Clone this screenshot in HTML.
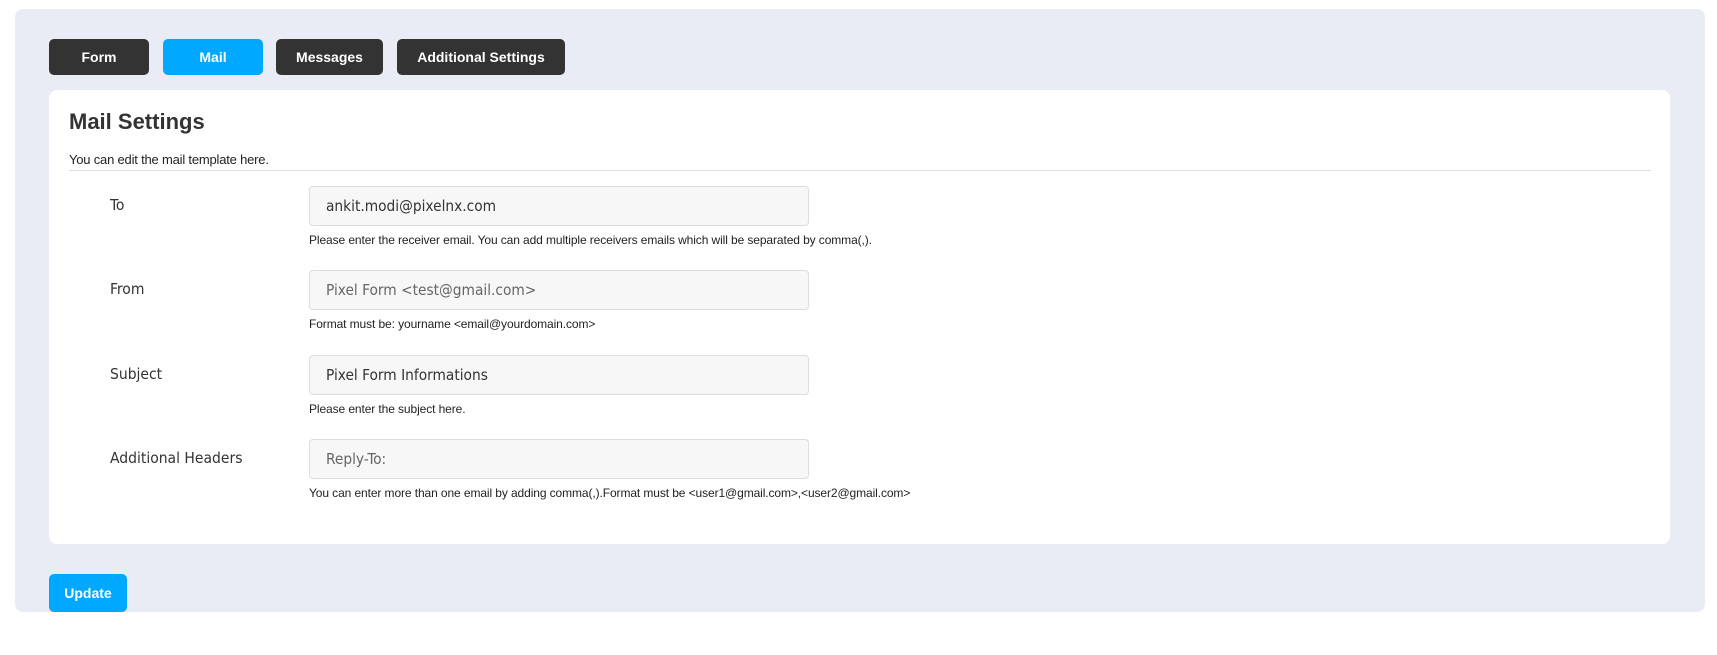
<!DOCTYPE html>
<html><head><meta charset="utf-8"><style>
*{box-sizing:border-box;margin:0;padding:0}
body{width:1717px;height:655px;background:#fff;font-family:"Liberation Sans",Arial,sans-serif;position:relative;overflow:hidden}
.outer{position:absolute;left:15px;top:9px;width:1690px;height:603px;background:#e9ecf4;border-radius:8px}
.tab{position:absolute;top:39px;height:36px;border-radius:5px;background:#333;color:#fff;font-weight:bold;font-size:14px;line-height:36px;text-align:center}
.card{position:absolute;left:49px;top:90px;width:1621px;height:454px;background:#fff;border-radius:8px}
h1{position:absolute;left:69px;top:109px;font-size:22px;color:#333;font-weight:bold}
.sub{position:absolute;left:69px;top:152px;font-size:13px;color:#222;letter-spacing:-0.2px}
.hr{position:absolute;left:69px;top:170px;width:1582px;height:1px;background:#ddd}
.lbl{position:absolute;left:110px;color:#333;font-family:"DejaVu Sans Condensed","Liberation Sans",sans-serif;font-size:15.5px}
.inp{position:absolute;left:309px;width:500px;height:40px;background:#f7f7f7;border:1px solid #ddd;border-radius:4px;padding-left:16px;line-height:38px;font-size:15.3px;color:#333;font-family:"DejaVu Sans Condensed","Liberation Sans",sans-serif}
.ph{color:#666}
.help{position:absolute;left:309px;font-size:12px;color:#222;letter-spacing:-0.1px}
.btn{position:absolute;left:49px;top:574px;width:78px;height:38px;background:#00a8ff;border-radius:5px;color:#fff;font-weight:bold;font-size:14px;line-height:38px;text-align:center}
</style></head><body>
<div class="outer"></div>
<div class="tab" style="left:49px;width:100px">Form</div>
<div class="tab" style="left:163px;width:100px;background:#00a8ff">Mail</div>
<div class="tab" style="left:276px;width:107px">Messages</div>
<div class="tab" style="left:397px;width:168px">Additional Settings</div>
<div class="card"></div>
<h1>Mail Settings</h1>
<div class="sub">You can edit the mail template here.</div>
<div class="hr"></div>

<div class="lbl" style="top:196px">To</div>
<div class="inp" style="top:186px">ankit.modi@pixelnx.com</div>
<div class="help" style="top:233px">Please enter the receiver email. You can add multiple receivers emails which will be separated by comma(,).</div>

<div class="lbl" style="top:280px">From</div>
<div class="inp ph" style="top:270px">Pixel Form &lt;test@gmail.com&gt;</div>
<div class="help" style="top:317px">Format must be: yourname &lt;email@yourdomain.com&gt;</div>

<div class="lbl" style="top:365px">Subject</div>
<div class="inp" style="top:355px">Pixel Form Informations</div>
<div class="help" style="top:402px">Please enter the subject here.</div>

<div class="lbl" style="top:449px">Additional Headers</div>
<div class="inp ph" style="top:439px">Reply-To:</div>
<div class="help" style="top:486px">You can enter more than one email by adding comma(,).Format must be &lt;user1@gmail.com&gt;,&lt;user2@gmail.com&gt;</div>

<div class="btn">Update</div>
</body></html>
